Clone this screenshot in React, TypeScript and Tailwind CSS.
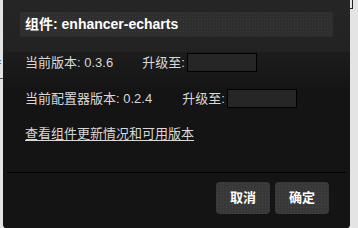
import React from 'react';

const FONT = "font-['Liberation_Sans','Noto_Sans_CJK_SC',sans-serif]";

function VersionRow({ label, version, gap }: { label: string; version: string; gap: string }) {
  return (
    <div className="flex items-center h-[19px] text-[13px] text-[#d8d8d8]">
      <span>{label}: {version}</span>
      <span className={gap}>升级至:</span>
      <span className="ml-[2px] w-[70px] h-[19px] bg-[#262626] border border-black" />
    </div>
  );
}

export default function App() {
  return (
    <div className={`relative w-[358px] h-[228px] overflow-hidden bg-[#e4e4e4] ${FONT}`}>
      {/* bits of the page behind the modal */}
      <span className="absolute left-[-3px] top-[56px] text-[14px] text-[#2b7bd6]">f</span>
      <div className="absolute left-0 top-[78px] w-[4px] h-px bg-[#555]" />
      <div className="absolute left-[206px] top-0 w-px h-[4px] bg-[#222]" />
      <div className="absolute right-[5px] top-0 w-px h-[9px] bg-[#222]" />
      <div className="absolute right-[5px] top-[8px] w-[4px] h-px bg-[#222]" />

      <div className="absolute left-[3px] top-[-3px] w-[347px] h-[232px] rounded-[5px] overflow-hidden flex flex-col bg-[#141414]">
        <div className="h-[55px] pt-[15px] px-[17px] bg-gradient-to-b from-[#262626] to-[#222]">
          <div className="h-[25px] px-[5px] flex items-center bg-[#2e2e2e] bg-[radial-gradient(#3a3a3a_1px,transparent_1px)] bg-[length:3px_3px] text-white text-[14px] font-bold">
            组件: enhancer-echarts
          </div>
        </div>
        <div className="flex-1 flex flex-col bg-gradient-to-b from-[#1d1d1d] to-[#141414] to-[40px]">
          <div className="px-[22px] pt-[1px] flex flex-col">
            <VersionRow label="当前版本" version="0.3.6" gap="ml-[29px]" />
            <div className="h-[17px]" />
            <VersionRow label="当前配置器版本" version="0.2.4" gap="ml-[30px]" />
            <a className="mt-[16px] text-[13px] text-[#d8d8d8] underline underline-offset-2 w-fit">查看组件更新情况和可用版本</a>
          </div>
          <div className="mt-[28px] mx-[4px] h-px bg-black" />
          <div className="flex justify-end gap-[5px] pr-[21px] pt-[9px]">
            <button className="w-[54px] h-[32px] rounded-[4px] bg-[#383838] bg-[radial-gradient(#444_1px,transparent_1px)] bg-[length:3px_3px] text-white text-[13px] font-bold">取消</button>
            <button className="w-[54px] h-[32px] rounded-[4px] bg-[#383838] bg-[radial-gradient(#444_1px,transparent_1px)] bg-[length:3px_3px] text-white text-[13px] font-bold">确定</button>
          </div>
        </div>
      </div>
    </div>
  );
}
